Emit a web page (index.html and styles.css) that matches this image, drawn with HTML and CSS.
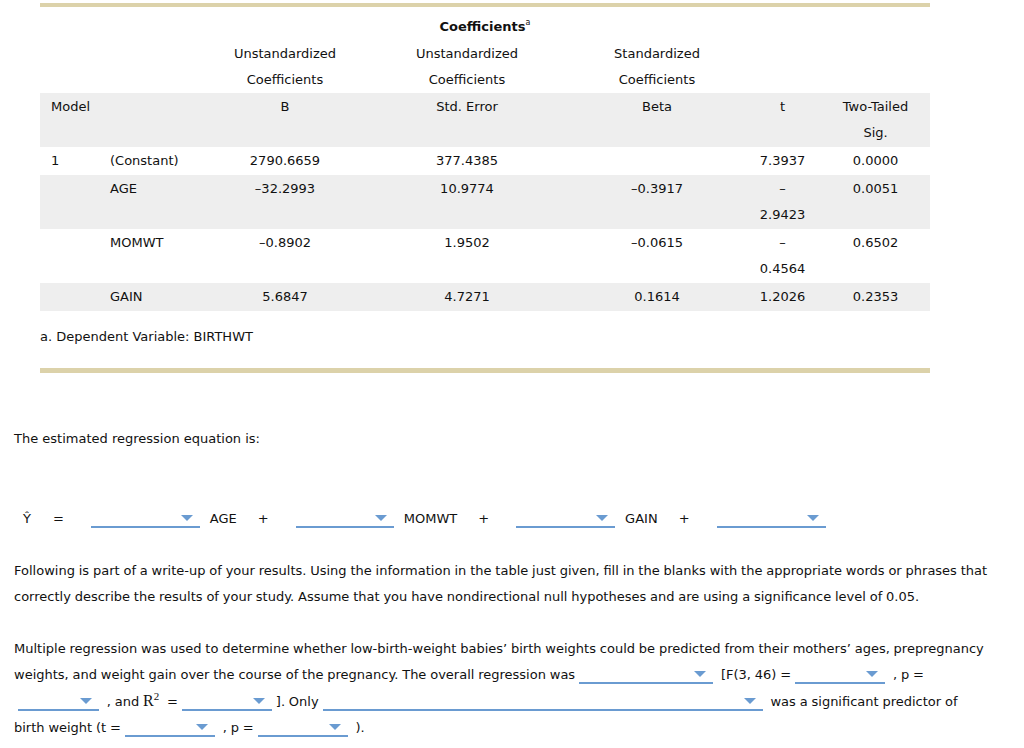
FILE: index.html
```html
<!DOCTYPE html>
<html lang="en">
<head>
<meta charset="utf-8">
<title>Coefficients</title>
<link rel="stylesheet" href="styles.css">
</head>
<body>
<div class="page">
  <div class="report">
    <div class="rule"></div>
    <table class="coef">
      <caption>Coefficients<sup>a</sup></caption>
      <colgroup>
        <col class="c1"><col class="c2"><col class="c3"><col class="c4"><col class="c5"><col class="c6"><col class="c7">
      </colgroup>
      <thead>
        <tr class="group">
          <th></th><th></th>
          <th><div class="stack">Unstandardized Coefficients</div></th>
          <th><div class="stack">Unstandardized Coefficients</div></th>
          <th><div class="stack">Standardized Coefficients</div></th>
          <th></th><th></th>
        </tr>
        <tr class="shade">
          <th class="left first">Model</th><th></th>
          <th>B</th><th>Std. Error</th><th>Beta</th><th class="tcol">t</th><th class="sig">Two-Tailed Sig.</th>
        </tr>
      </thead>
      <tbody>
        <tr>
          <td class="left first">1</td><td class="left name">(Constant)</td>
          <td>2790.6659</td><td>377.4385</td><td></td><td class="tcol">7.3937</td><td class="sig">0.0000</td>
        </tr>
        <tr class="shade">
          <td></td><td class="left name">AGE</td>
          <td>–32.2993</td><td>10.9774</td><td>–0.3917</td><td class="tcol">–<wbr>2.9423</td><td class="sig">0.0051</td>
        </tr>
        <tr>
          <td></td><td class="left name">MOMWT</td>
          <td>–0.8902</td><td>1.9502</td><td>–0.0615</td><td class="tcol">–<wbr>0.4564</td><td class="sig">0.6502</td>
        </tr>
        <tr class="shade">
          <td></td><td class="left name">GAIN</td>
          <td>5.6847</td><td>4.7271</td><td>0.1614</td><td class="tcol">1.2026</td><td class="sig">0.2353</td>
        </tr>
      </tbody>
    </table>
    <p class="footnote">a. Dependent Variable: BIRTHWT</p>
    <div class="rule rule-bottom"></div>
  </div>

  <p class="prompt">The estimated regression equation is:</p>

  <div class="equation"><span class="yhat">Ŷ</span><span class="op">=</span><span class="dd eq w109"></span><span class="lbl">AGE</span><span class="op">+</span><span class="dd eq w98"></span><span class="lbl">MOMWT</span><span class="op">+</span><span class="dd eq w99"></span><span class="lbl">GAIN</span><span class="op">+</span><span class="dd eq w109"></span></div>

  <p class="para">Following is part of a write-up of your results. Using the information in the table just given, fill in the blanks with the appropriate words or phrases that correctly describe the results of your study. Assume that you have nondirectional null hypotheses and are using a significance level of 0.05.</p>

  <p class="para">Multiple regression was used to determine whether low-birth-weight babies’ birth weights could be predicted from their mothers’ ages, prepregnancy weights, and weight gain over the course of the pregnancy. The overall regression was<span class="dd w134"></span> [F(3, 46) =<span class="dd w90"></span> , p =<span class="dd w81"></span> , and <span class="math">R<sup>2</sup></span> &nbsp;=<span class="dd w90"></span>]. Only<span class="dd w440"></span> was a significant predictor of <span class="keep">birth weight (t =<span class="dd w90"></span></span> , p =<span class="dd w90"></span> ).</p>
</div>
</body>
</html>
```
FILE: styles.css
```css
body {
  margin: 0;
  font-family: "DejaVu Sans", Verdana, sans-serif;
  font-size: 13px;
  color: #111;
  background: #fff;
}

.page {
  padding: 3px 32px 0 14px;
}

.report {
  margin-left: 26px;
  width: 890px;
}

.rule {
  height: 4px;
  background: #dcd2aa;
}

.rule-bottom {
  margin-top: 18px;
  height: 5px;
}

.coef {
  width: 890px;
  table-layout: fixed;
  border-collapse: collapse;
  margin-top: 7px;
  line-height: 26px;
}

.coef caption {
  font-weight: bold;
  line-height: 26px;
}

.coef caption sup {
  font-weight: normal;
  font-size: 8px;
  line-height: 0;
  vertical-align: 6px;
}

.c1 { width: 60px; }
.c2 { width: 110px; }
.c3 { width: 150px; }
.c4 { width: 214px; }
.c5 { width: 166px; }
.c6 { width: 85px; }
.c7 { width: 105px; }

.coef th,
.coef td {
  padding: 1px 0;
  vertical-align: top;
  text-align: center;
  font-weight: normal;
}

.coef .group th { padding-bottom: 0; }

.coef .left { text-align: left; }
.coef .first { padding-left: 11px; }
.coef .name { padding-left: 10px; }
.coef .tcol { padding-left: 18px; padding-right: 18px; }
.coef .sig { padding-left: 8px; padding-right: 12px; }

.stack {
  width: 104px;
  margin: 0 auto;
}

.shade { background: #eeeeee; }

.footnote {
  margin: 13px 0 0;
  line-height: 26px;
}

.prompt {
  margin: 53px 0 0;
  line-height: 26px;
}

.equation {
  margin-top: 54px;
  line-height: 26px;
  padding-left: 9px;
}

.yhat { margin-right: 22px; }
.op { margin-right: 27px; }
.lbl { margin: 0 21px 0 10px; }

.para {
  margin: 26px 0 0;
  line-height: 26px;
  word-spacing: -0.3px;
}

.keep { white-space: nowrap; }

.dd {
  display: inline-block;
  height: 13px;
  border-bottom: 2px solid #6a9bd1;
  vertical-align: -5px;
  margin: 0 4px;
  position: relative;
}

.dd.eq { margin: 0; }

.dd::after {
  content: "";
  position: absolute;
  right: 7px;
  top: 2px;
  border-left: 6px solid transparent;
  border-right: 6px solid transparent;
  border-top: 6px solid #6a9bd1;
}

.w81 { width: 81px; }
.w90 { width: 90px; }
.w98 { width: 98px; }
.w99 { width: 99px; }
.w109 { width: 109px; }
.w134 { width: 134px; }
.w440 { width: 440px; }

.math {
  font-family: "Liberation Serif", "Times New Roman", serif;
  font-size: 16px;
}

.math sup {
  font-size: 11px;
  line-height: 0;
  vertical-align: 6px;
}
```
